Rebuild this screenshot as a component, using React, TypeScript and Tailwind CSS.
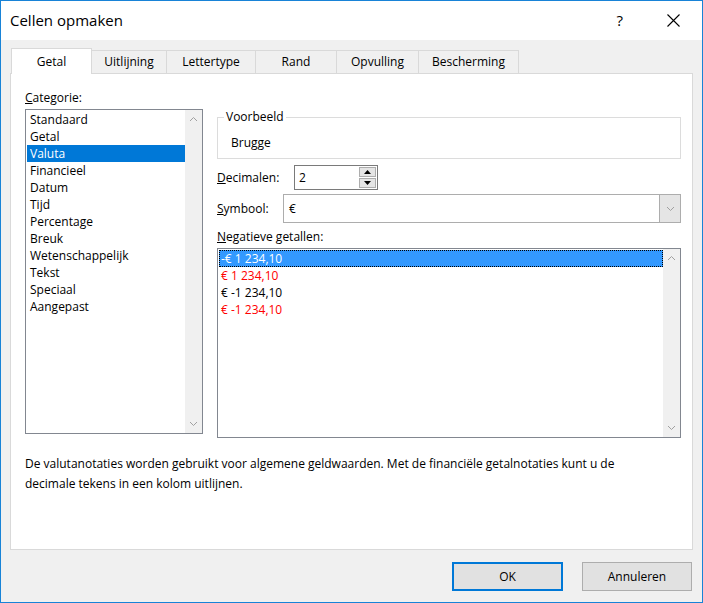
import React from "react";

const Up = () => (
  <svg width="9" height="6" viewBox="0 0 9 6"><path d="M1 5L4.5 1.5L8 5" fill="none" stroke="#a0a0a0" strokeWidth="1" /></svg>
);
const Down = () => (
  <svg width="9" height="6" viewBox="0 0 9 6"><path d="M1 1L4.5 4.5L8 1" fill="none" stroke="#a0a0a0" strokeWidth="1" /></svg>
);

const Scroll = () => (
  <div className="w-[17px] bg-[#f0f0f0] flex flex-col justify-between items-center py-[6px]">
    <Up />
    <Down />
  </div>
);

export default function App() {
  const cats = ["Standaard","Getal","Valuta","Financieel","Datum","Tijd","Percentage","Breuk","Wetenschappelijk","Tekst","Speciaal","Aangepast"];
  const tabs = ["Getal","Uitlijning","Lettertype","Rand","Opvulling","Bescherming"];
  const tabW = [81, 75, 89, 81, 82, 100];
  return (
    <div className="w-[703px] h-[603px] border border-[#1883d7] bg-[#f0f0f0] flex flex-col text-[12px] text-black" style={{ fontFamily: '"Open Sans", "Noto Sans", sans-serif' }}>
      <div className="h-[39px] bg-white flex items-center pl-[9px] pr-[22px] text-[15px]">
        <span>Cellen opmaken</span>
        <span className="ml-auto mr-[44px] text-[15px]">?</span>
        <svg width="13" height="13" viewBox="0 0 13 13"><path d="M0.5 0.5L12.5 12.5M12.5 0.5L0.5 12.5" stroke="#000" strokeWidth="1.1" /></svg>
      </div>
      <div className="flex pl-[10px] pt-[8px] items-end h-[33px]">
        {tabs.map((t, i) => (
          <div key={t} style={{ width: tabW[i] }} className={i === 0 ? "h-[26px] bg-white border border-b-0 border-[#d9d9d9] flex items-center justify-center relative z-10 -mb-px" : "h-[23px] bg-[#f0f0f0] border border-b-0 border-l-0 border-[#d9d9d9] flex items-center justify-center"}>
            {t}
          </div>
        ))}
      </div>
      <div className="mx-[9px] h-[477px] bg-white border border-[#d9d9d9] pl-[14px] pr-[11px] pt-[15px] flex flex-col">
        <div className="flex">
          <div className="w-[178px] flex flex-col">
            <div className="h-[20px]"><u>C</u>ategorie:</div>
            <div className="h-[325px] border border-[#828790] flex">
              <div className="flex-1 pt-[1px] pl-[1px]">
                {cats.map((c) => (
                  <div key={c} className={c === "Valuta" ? "h-[17px] leading-[17px] pl-[3px] bg-[#0078d7] text-white" : "h-[17px] leading-[17px] pl-[3px]"}>{c}</div>
                ))}
              </div>
              <Scroll />
            </div>
          </div>
          <div className="ml-[14px] flex-1 flex flex-col pt-[28px]">
            <div className="h-[42px] border border-[#dcdcdc] relative">
              <span className="absolute -top-[9px] left-[6px] bg-white px-[2px] leading-[16px]">Voorbeeld</span>
              <div className="pl-[13px] pt-[16px]">Brugge</div>
            </div>
            <div className="flex items-center mt-[6px] h-[25px]">
              <span className="w-[77px]"><u>D</u>ecimalen:</span>
              <div className="w-[84px] h-[25px] border border-[#7a7a7a] flex items-center pl-[4px]">
                <span className="flex-1">2</span>
                <div className="w-[18px] h-full flex flex-col justify-center gap-[1px] pr-[1px]">
                  <div className="h-[10px] bg-[#e5e5e5] border border-[#adadad] flex items-center justify-center"><svg width="7" height="4"><path d="M0 4L3.5 0L7 4Z" fill="#000"/></svg></div>
                  <div className="h-[10px] bg-[#e5e5e5] border border-[#adadad] flex items-center justify-center"><svg width="7" height="4"><path d="M0 0L3.5 4L7 0Z" fill="#000"/></svg></div>
                </div>
              </div>
            </div>
            <div className="flex items-center mt-[4px] h-[29px]">
              <span className="w-[66px]"><u>S</u>ymbool:</span>
              <div className="flex-1 h-[29px] border border-[#adadad] flex items-center pl-[5px]">
                <span className="flex-1">€</span>
                <div className="w-[21px] h-full bg-[#e5e5e5] border-l border-[#adadad] flex items-center justify-center"><Down /></div>
              </div>
            </div>
            <div className="mt-[5px] h-[20px]"><u>N</u>egatieve getallen:</div>
            <div className="h-[190px] border border-[#828790] flex">
              <div className="flex-1 pt-[1px] pl-[1px]">
                <div className="h-[17px] leading-[17px] pl-[2px] bg-[#3399ff] text-white outline outline-1 outline-dotted outline-black -outline-offset-1">-€ 1 234,10</div>
                <div className="h-[17px] leading-[17px] pl-[2px] text-[#ff0000]">€ 1 234,10</div>
                <div className="h-[17px] leading-[17px] pl-[2px]">€ -1 234,10</div>
                <div className="h-[17px] leading-[17px] pl-[2px] text-[#ff0000]">€ -1 234,10</div>
              </div>
              <Scroll />
            </div>
          </div>
        </div>
        <div className="mt-[16px] leading-[20px] pr-[20px]">De valutanotaties worden gebruikt voor algemene geldwaarden. Met de financiële getalnotaties kunt u de decimale tekens in een kolom uitlijnen.</div>
      </div>
      <div className="flex justify-end gap-[19px] pr-[10px] pt-[12px]">
        <button className="w-[111px] h-[29px] bg-[#e1e1e1] border-2 border-[#0078d7]">OK</button>
        <button className="w-[110px] h-[29px] bg-[#e1e1e1] border border-[#adadad]">Annuleren</button>
      </div>
    </div>
  );
}
